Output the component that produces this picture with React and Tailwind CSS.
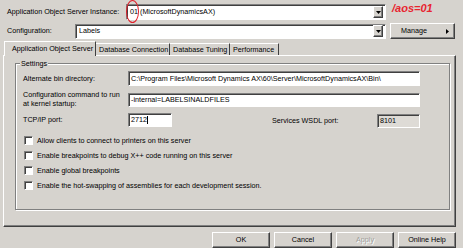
const sunken =
  "border border-t-[#808080] border-l-[#808080] border-b-white border-r-white shadow-[inset_1px_1px_0_#404040]";
const raised =
  "border border-t-white border-l-white border-b-[#404040] border-r-[#404040] shadow-[inset_-1px_-1px_0_#808080]";

function DropBtn() {
  return (
    <div
      className={
        raised +
        " w-[10px] h-[12px] bg-[#d6d3ce] flex items-center justify-center shrink-0"
      }
    >
      <svg width="5" height="3" viewBox="0 0 5 3">
        <path d="M0 0h5L2.5 3z" fill="#000" />
      </svg>
    </div>
  );
}

function Btn({ children, disabled, className = "" }) {
  return (
    <div
      className={
        raised +
        " w-[58px] h-[16px] bg-[#d6d3ce] flex items-center justify-center " +
        (disabled ? "text-[#a09e9a] [text-shadow:1px_1px_0_#fff] " : "") +
        className
      }
    >
      {children}
    </div>
  );
}

function Check({ children }) {
  return (
    <div className="h-[15px] flex items-center">
      <div className={sunken + " w-[9px] h-[9px] bg-white ml-[1px] mr-[4px]"} />
      <span>{children}</span>
    </div>
  );
}

export default function App() {
  return (
    <div className="w-[474px] h-[248px] bg-white overflow-hidden flex font-['Liberation_Sans',Arial,sans-serif] text-[7.2px] leading-none text-black">
      <div className="w-[463px] h-full bg-[#d6d3ce] flex flex-col relative">
        {/* Row 1 */}
        <div className="flex items-center mt-[4px] pl-[7px] h-[16px]">
          <span className="w-[119px]">Application Object Server Instance:</span>
          <div
            className={
              sunken +
              " w-[260px] h-[16px] bg-white flex items-center justify-between pl-[3px] pr-[2px]"
            }
          >
            <span>01 (MicrosoftDynamicsAX)</span>
            <DropBtn />
          </div>
          <span className="ml-[6px] text-[11px] italic font-semibold text-[#e8242e] -mt-[7px]">
            /aos=01
          </span>
        </div>
        <div className="absolute left-[126px] top-[0px] w-[13px] h-[23px] rounded-[50%] border-[1.5px] border-[#e01e2a]" />

        {/* Row 2 */}
        <div className="flex items-center mt-[3px] pl-[7px] h-[16px]">
          <span className="w-[68px]">Configuration:</span>
          <div
            className={
              sunken +
              " w-[311px] h-[15px] bg-white flex items-center justify-between pl-[3px] pr-[2px]"
            }
          >
            <span>Labels</span>
            <DropBtn />
          </div>
          <div
            className={
              raised +
              " ml-[4px] w-[65px] h-[16px] bg-[#d6d3ce] flex items-center justify-end pr-[5px]"
            }
          >
            <span className="mr-[19px]">Manage</span>
            <svg width="3" height="5" viewBox="0 0 3 5">
              <path d="M0 0v5l3-2.5z" fill="#000" />
            </svg>
          </div>
        </div>

        {/* Tabs */}
        <div className="flex items-end h-[14px] mt-[2px] pl-[4px] relative z-10">
          <div className="h-[15px] -mb-[1px] w-[92px] bg-[#d6d3ce] border-t border-l border-t-white border-l-white border-r border-r-[#404040] flex items-center pl-[7px]">
            Application Object Server
          </div>
          <div className="h-[12px] w-[74px] border-r border-r-[#404040] border-t border-t-white flex items-center pl-[3px]">
            Database Connection
          </div>
          <div className="h-[12px] w-[60px] border-r border-r-[#404040] border-t border-t-white flex items-center pl-[3px]">
            Database Tuning
          </div>
          <div className="h-[12px] w-[49px] border-r border-r-[#404040] border-t border-t-white flex items-center pl-[3px]">
            Performance
          </div>
        </div>

        {/* Panel */}
        <div
          className={
            raised +
            " ml-[3px] w-[453px] h-[177px] pl-[11px] pt-[7px]"
          }
        >
          <div className="relative w-[435px] h-[147px] border border-[#808080] shadow-[1px_1px_0_#fff,inset_1px_1px_0_#fff] pl-[7px] pt-[7px]">
            <span className="absolute left-[4px] -top-[4px] px-[1px] bg-[#d6d3ce]">
              Settings
            </span>

            <div className="flex items-center h-[15px]">
              <span className="w-[105px]">Alternate bin directory:</span>
              <div className={sunken + " w-[292px] h-[15px] bg-white flex items-center pl-[2px]"}>
                {"C:\\Program Files\\Microsoft Dynamics AX\\60\\Server\\MicrosoftDynamicsAX\\Bin\\"}
              </div>
            </div>

            <div className="flex items-center h-[14px] mt-[7px]">
              <span className="w-[105px] leading-[9px] -mt-[2px]">
                Configuration command to run
                <br />
                at kernel startup:
              </span>
              <div className={sunken + " w-[292px] h-[14px] bg-white flex items-center pl-[2px]"}>
                -internal=LABELSINALDFILES
              </div>
            </div>

            <div className="flex items-center h-[14px] mt-[6px]">
              <span className="w-[105px]">TCP/IP port:</span>
              <div className={sunken + " w-[44px] h-[14px] bg-white flex items-center pl-[2px]"}>
                2712<span className="w-px h-[8px] bg-black" />
              </div>
              <span className="ml-[100px] w-[105px] mt-[2px]">Services WSDL port:</span>
              <div className={sunken + " w-[43px] h-[14px] bg-[#dedbd6] flex items-center pl-[2px] mt-[2px]"}>
                8101
              </div>
            </div>

            <div className="mt-[6px] flex flex-col">
              <Check>Allow clients to connect to printers on this server</Check>
              <Check>Enable breakpoints to debug X++ code running on this server</Check>
              <Check>Enable global breakpoints</Check>
              <Check>Enable the hot-swapping of assemblies for each development session.</Check>
            </div>
          </div>
        </div>

        {/* Buttons */}
        <div className="flex justify-end gap-[4px] pr-[7px] mt-[5px]">
          <Btn>OK</Btn>
          <Btn>Cancel</Btn>
          <Btn disabled>Apply</Btn>
          <Btn>Online Help</Btn>
        </div>
      </div>
    </div>
  );
}
